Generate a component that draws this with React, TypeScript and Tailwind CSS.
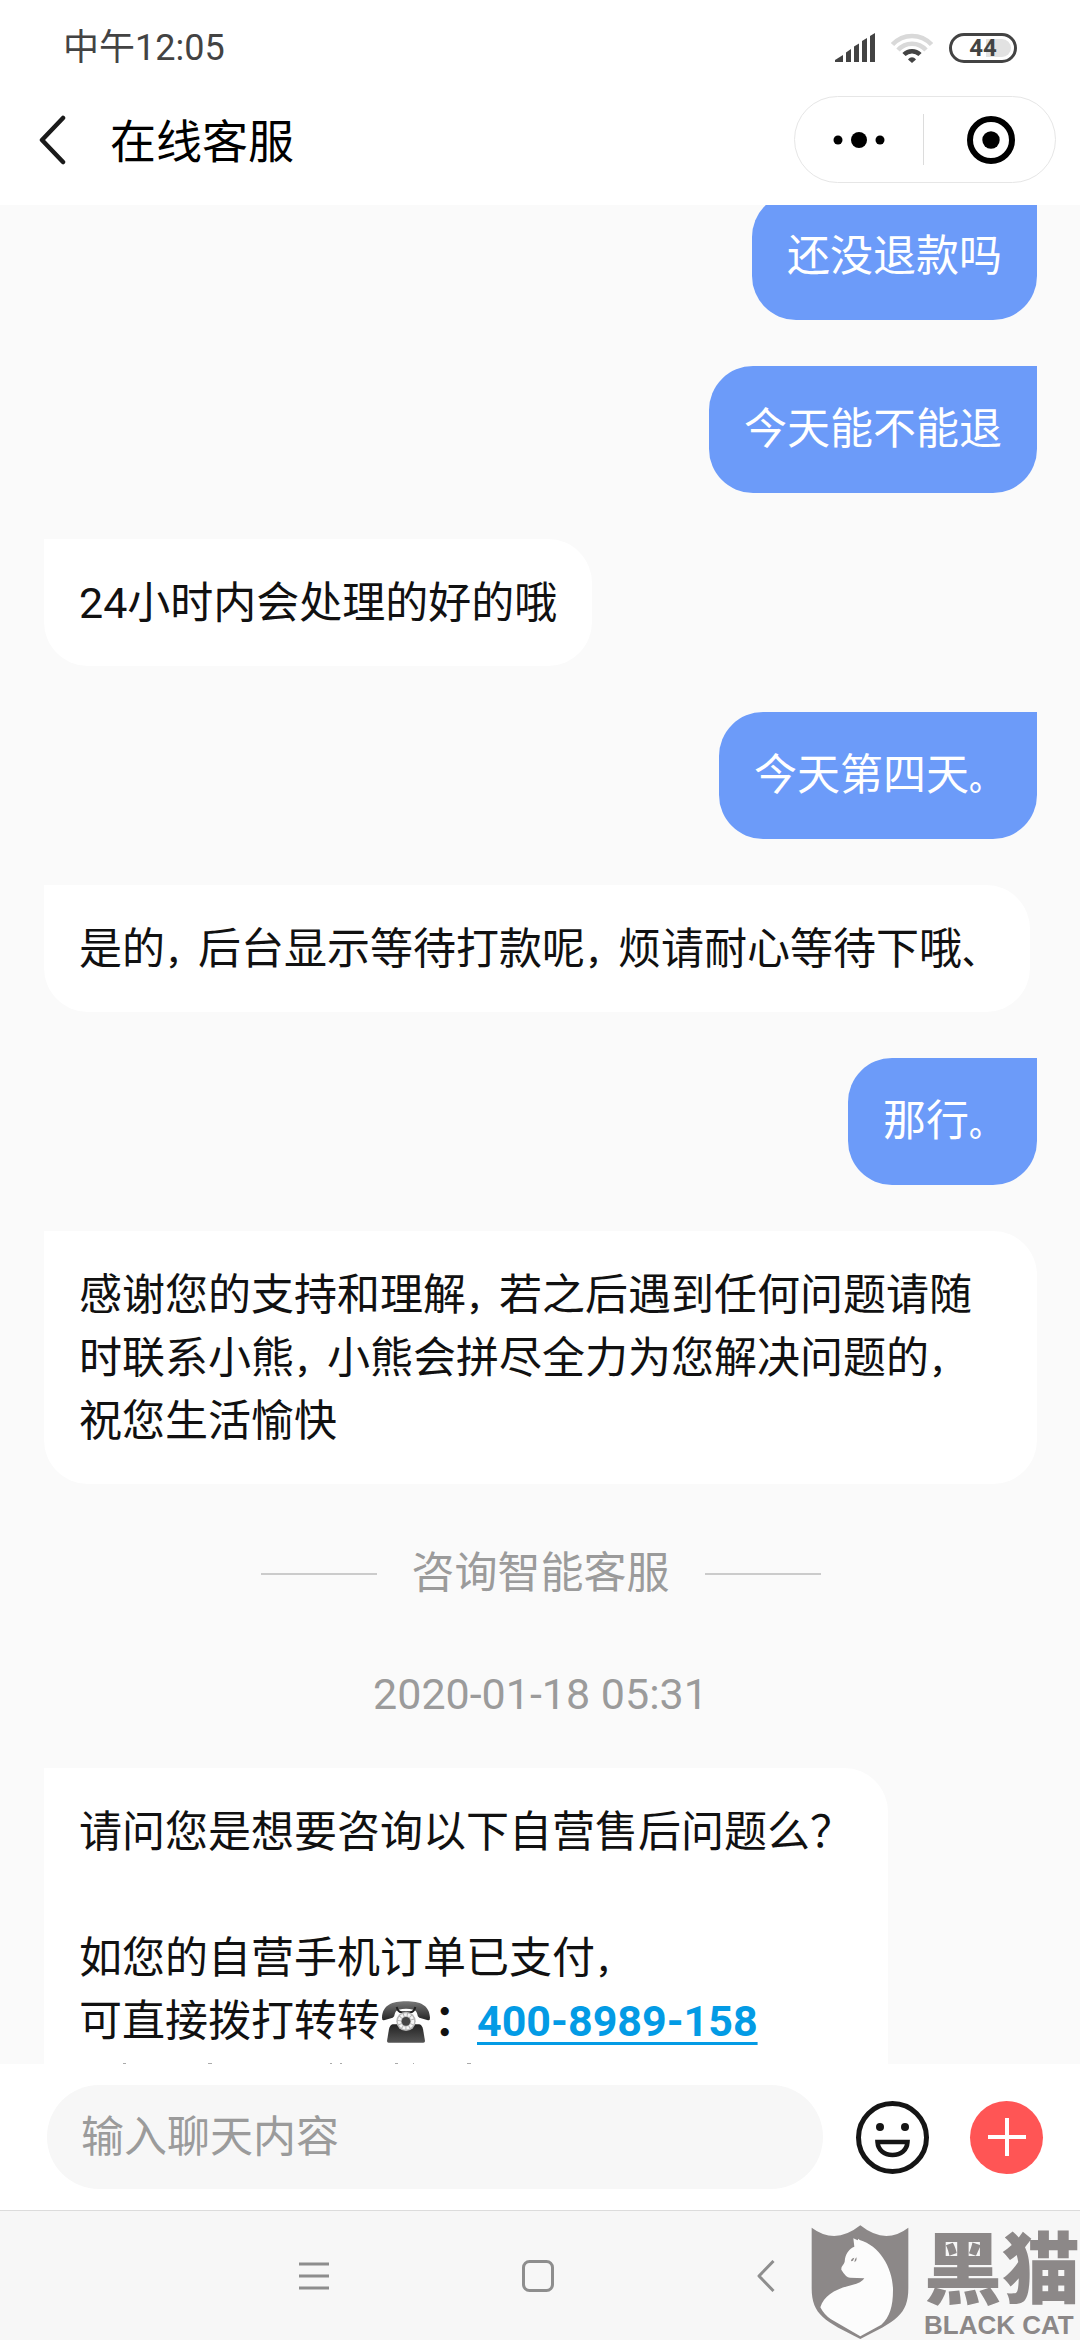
import { Fragment, type ReactNode } from 'react';

const PUNCTUATION = /([，。、])/;

/** Chinese text whose punctuation marks take less room than a full character. */
function ChatText({ children }: { children: string }) {
  return (
    <>
      {children.split(PUNCTUATION).map((part, i) =>
        PUNCTUATION.test(part) ? (
          <span key={i} className="text-[33px] leading-none font-medium">
            {part}
          </span>
        ) : (
          <Fragment key={i}>{part}</Fragment>
        ),
      )}
    </>
  );
}

function Mine({ children }: { children: string }) {
  return (
    <div className="w-fit max-w-full self-end rounded-[44px] rounded-tr-none bg-[#6c9bf9] px-[35px] py-8 text-white">
      <ChatText>{children}</ChatText>
    </div>
  );
}

function Theirs({ children }: { children: ReactNode }) {
  return (
    <div className="w-fit max-w-full self-start rounded-[44px] rounded-tl-none bg-white px-[35px] pt-[33px] pb-[31px] text-[#111]">
      {children}
    </div>
  );
}

function StatusBar() {
  return (
    <div className="flex h-[96px] items-center justify-between px-[63px] text-[#434343]">
      <span className="text-[36px] leading-[48px]">中午12:05</span>
      <div className="flex items-center gap-4">
        <svg width="40" height="30" viewBox="0 0 40 30" fill="#434343" aria-label="信号">
          <path d="M0 29V27L8 22V29Z" />
          <path d="M11 29V19.500L16 16V29Z" />
          <path d="M19 29V13.500L24 10.500V29Z" />
          <path d="M27 29V8L32 5V29Z" />
          <path d="M35 29V3L40 0V29Z" />
        </svg>
        <svg width="42" height="30" viewBox="0 0 42 30" fill="none" strokeWidth="4.500" aria-label="无线网络">
          <path d="M1.500 11.500C12 0 30 0 40.500 11.500" stroke="#d9d9d9" />
          <path d="M7 17C14.500 8.500 27.500 8.500 35 17" stroke="#d9d9d9" />
          <path d="M13 21.500C17.500 17 24.500 17 29 21.500" stroke="#434343" />
          <path d="M17 26.500C19.500 23.500 22.500 23.500 25 26.500L21 30Z" fill="#434343" />
        </svg>
        <div className="relative flex h-[30px] w-[68px] items-center justify-center rounded-full border-[3px] border-[#434343]">
          <span className="absolute right-[3px] h-[18px] w-[25px] rounded-r-full bg-[#e2e2e2]" />
          <span className="relative text-[24px] leading-6 font-bold">44</span>
        </div>
      </div>
    </div>
  );
}

function TitleBar() {
  return (
    <div className="flex h-[109px] items-start pr-6 pl-[29px]">
      <button type="button" aria-label="返回" className="flex h-[88px] w-[46px] items-center justify-center">
        <svg width="28" height="50" viewBox="0 0 28 50" fill="none" stroke="#1a1a1a" strokeWidth="4.500">
          <path d="M25 3L4 25L25 47" strokeLinecap="round" strokeLinejoin="round" />
        </svg>
      </button>
      <h1 className="ml-[35px] text-[46px] leading-[92px] text-black">在线客服</h1>
      <div className="ml-auto flex h-[87px] w-[262px] items-center rounded-full border border-[#e6e6e6]">
        <button type="button" aria-label="更多" className="flex h-full flex-1 items-center justify-center">
          <svg width="52" height="18" viewBox="0 0 52 18">
            <circle cx="5" cy="9" r="4.500" />
            <circle cx="26" cy="9" r="8" />
            <circle cx="47" cy="9" r="4.500" />
          </svg>
        </button>
        <span className="h-[51px] w-px bg-[#dcdcdc]" />
        <button type="button" aria-label="关闭" className="flex h-full flex-1 items-center justify-center pl-1">
          <svg width="48" height="48" viewBox="0 0 48 48">
            <circle cx="24" cy="24" r="21" fill="none" stroke="#000" strokeWidth="6" />
            <circle cx="24" cy="24" r="8.700" />
          </svg>
        </button>
      </div>
    </div>
  );
}

function Telephone() {
  return (
    <svg
      className="mr-1 ml-[2px] inline-block h-[42px] w-[48px] align-[-7px]"
      viewBox="0 0 144 126"
      role="img"
      aria-label="电话"
    >
      <defs>
        <linearGradient id="handset" x1="0" y1="0" x2="0" y2="1">
          <stop offset="0" stopColor="#777" />
          <stop offset="1" stopColor="#252525" />
        </linearGradient>
        <linearGradient id="base" x1="0" y1="0" x2="0" y2="1">
          <stop offset="0" stopColor="#222" />
          <stop offset="1" stopColor="#555" />
        </linearGradient>
      </defs>
      <path d="M32 70H112Q120 72 123 84L129 120Q129 125 124 125H20Q15 125 15 120L21 84Q24 72 32 70Z" fill="url(#base)" />
      <path
        d="M0 50C2 12 30 1 72 1S142 12 144 50Q144 59 138 58L112 50Q106 47 106 40Q104 28 94 26Q72 20 50 26Q40 28 38 40Q38 47 32 50L6 58Q0 59 0 50Z"
        fill="url(#handset)"
      />
      <path d="M44 18Q48 34 60 34H84Q96 34 100 18" fill="none" stroke="#222" strokeWidth="6" />
      <circle cx="72" cy="61" r="29" fill="#b5b5b5" />
      <circle cx="72" cy="61" r="20" fill="none" stroke="#f4f4f4" strokeWidth="9" strokeDasharray="8 3" />
      <circle cx="72" cy="61" r="13" fill="#444" />
    </svg>
  );
}

function Conversation() {
  return (
    <main className="min-h-0 flex-1 overflow-hidden bg-[#fafafa] pr-[43px] pl-[44px] text-[43px] leading-[63px]">
      <div className="-mt-3 flex flex-col gap-[46px]">
        <Mine>还没退款吗</Mine>
        <Mine>今天能不能退</Mine>
        <Theirs>24小时内会处理的好的哦</Theirs>
        <Mine>今天第四天。</Mine>
        <Theirs>
          <ChatText>是的，后台显示等待打款呢，烦请耐心等待下哦、</ChatText>
        </Theirs>
        <Mine>那行。</Mine>
        <Theirs>
          <ChatText>
            感谢您的支持和理解，若之后遇到任何问题请随时联系小熊，小熊会拼尽全力为您解决问题的，祝您生活愉快
          </ChatText>
        </Theirs>
      </div>
      <div className="mt-[58px] flex items-center justify-center gap-[35px] text-[#9b9b9b]">
        <span className="h-[2px] w-[116px] bg-[#cbcbcb]" />
        <span>咨询智能客服</span>
        <span className="h-[2px] w-[116px] bg-[#cbcbcb]" />
      </div>
      <time className="mt-[58px] mb-[42px] block text-center text-[#9b9b9b]">2020-01-18 05:31</time>
      <Theirs>
        <p>请问您是想要咨询以下自营售后问题么？</p>
        <p>&nbsp;</p>
        <p>
          <ChatText>如您的自营手机订单已支付，</ChatText>
        </p>
        <p className="h-[63px]">
          可直接拨打转转
          <Telephone />
          <b>：</b>
          <a href="tel:4008989158" className="font-bold text-[#039be5] underline decoration-[3px] underline-offset-[6px]">
            400-8989-158
          </a>
        </p>
        <div className="h-[63px] pt-[10px]">
          <svg width="400" height="2" viewBox="0 0 400 2" stroke="#aaa" strokeWidth="2" aria-hidden="true">
            <path d="M44 1H47M129 1H133M251 1H253M261 1H263M316 1H319M334 1H335M388 1H392" />
          </svg>
        </div>
      </Theirs>
    </main>
  );
}

function InputBar() {
  return (
    <form className="flex h-[146px] items-center bg-white pr-[37px] pl-[47px]" onSubmit={(e) => e.preventDefault()}>
      <input
        type="text"
        aria-label="输入聊天内容"
        placeholder="输入聊天内容"
        className="h-[104px] min-w-0 flex-1 rounded-full bg-[#f7f7f7] px-[34px] text-[43px] text-[#111] outline-none placeholder:text-[#9b9b9b]"
      />
      <button type="button" aria-label="表情" className="ml-[33px]">
        <svg width="73" height="73" viewBox="0 0 73 73" fill="none" stroke="#151515">
          <circle cx="36.500" cy="36.500" r="34" strokeWidth="5" />
          <circle cx="24" cy="26" r="4" fill="#151515" stroke="none" />
          <circle cx="49" cy="26" r="4" fill="#151515" stroke="none" />
          <path d="M21.500 41H51.500C51 49 45 54 36.500 54S22 49 21.500 41Z" strokeWidth="4.500" />
        </svg>
      </button>
      <button
        type="button"
        aria-label="更多功能"
        className="ml-[41px] flex size-[73px] items-center justify-center rounded-full bg-[#ff5555]"
      >
        <svg width="38" height="38" viewBox="0 0 38 38" stroke="#fff" strokeWidth="4">
          <path d="M19 0V38M0 19H38" />
        </svg>
      </button>
    </form>
  );
}

function SystemNav() {
  return (
    <nav className="relative flex h-[130px] items-center justify-center border-t border-[#dcdcdc] bg-[#f7f7f7]">
      <button type="button" aria-label="菜单" className="flex h-full w-[226px] items-center justify-center">
        <svg width="30" height="28" viewBox="0 0 30 28" stroke="#8e8e8e" strokeWidth="3">
          <path d="M0 2H30M0 14H30M0 26H30" />
        </svg>
      </button>
      <button type="button" aria-label="主页" className="flex h-full w-[226px] items-center justify-center pr-1">
        <svg width="32" height="32" viewBox="0 0 32 32" fill="none" stroke="#8e8e8e" strokeWidth="3">
          <rect x="1.500" y="1.500" width="29" height="29" rx="6" />
        </svg>
      </button>
      <button type="button" aria-label="返回" className="flex h-full w-[226px] items-center justify-center">
        <svg width="18" height="32" viewBox="0 0 18 32" fill="none" stroke="#8e8e8e" strokeWidth="3">
          <path d="M16.500 1L2 16L16.500 31" strokeLinejoin="round" />
        </svg>
      </button>
      <BlackCatMark />
    </nav>
  );
}

function BlackCatMark() {
  return (
    <div className="pointer-events-none absolute right-0 bottom-0 flex items-end gap-[15px] text-[#8c8888]">
      <svg width="98" height="116" viewBox="92 72 294 348">
        <path
          d="M94 83Q165 136 240 76Q315 136 384 83V265C384 345 345 365 240 417C135 365 94 345 94 265Z"
          fill="#8c8888"
        />
        <path
          d="M222 140L219 115L232 121L234 116L238 120C298 137 338 205 338 270C338 320 328 352 303 374L240 409L152 358Q132 345 120 322C132 285 165 267 215 255Q244 249 252 235L209 233Q197 233 183 209Q182 201 190 192Q194 186 194 176C198 157 208 146 222 140Z"
          fill="#fcfcfc"
        />
        <path d="M212 184Q212 175 222 173L218 182ZM228 172Q231 182 222 187L224 178Z" fill="#8c8888" />
      </svg>
      <div className="flex flex-col">
        <span className="text-[78px] leading-[76px] font-black">黑猫</span>
        <span className="font-['Liberation_Sans'] text-[26px] leading-[30px] font-bold whitespace-nowrap">BLACK CAT</span>
      </div>
    </div>
  );
}

export default function App() {
  return (
    <div className="flex h-screen flex-col overflow-hidden bg-white font-[Roboto,'Noto_Sans_CJK_SC',sans-serif]">
      <header className="bg-white">
        <StatusBar />
        <TitleBar />
      </header>
      <Conversation />
      <InputBar />
      <SystemNav />
    </div>
  );
}
